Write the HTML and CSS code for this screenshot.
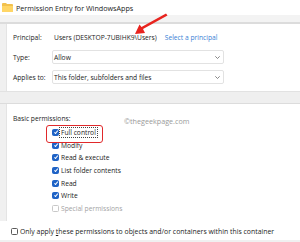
FILE: index.html
```html
<!DOCTYPE html>
<html>
<head>
<meta charset="utf-8">
<link rel="stylesheet" href="styles.css">
</head>
<body>
<div class="titlebar">
  <svg class="folder" width="11" height="9" viewBox="0 0 11 9"><path d="M0 1 Q0 0 1 0 H4 L5 1 H10 Q11 1 11 2 V8 Q11 9 10 9 H1 Q0 9 0 8 Z" fill="#f2c14e"/><path d="M0 3 H11 V8 Q11 9 10 9 H1 Q0 9 0 8 Z" fill="#ffd666"/></svg>
  <span class="title">Permission Entry for WindowsApps</span>
</div>
<div class="band"></div>
<div class="panel top">
  <div class="row">
    <span class="label">Principal:</span>
    <span class="value">Users (DESKTOP-7UBIHK9\Users)</span>
    <span class="link">Select a principal</span>
  </div>
  <div class="row">
    <span class="label">Type:</span>
    <div class="select"><span>Allow</span><svg width="5" height="3" viewBox="0 0 5 3"><path d="M0.3 0.3 L2.5 2.5 L4.7 0.3" fill="none" stroke="#555" stroke-width="0.7"/></svg></div>
  </div>
  <div class="row">
    <span class="label">Applies to:</span>
    <div class="select"><span>This folder, subfolders and files</span><svg width="5" height="3" viewBox="0 0 5 3"><path d="M0.3 0.3 L2.5 2.5 L4.7 0.3" fill="none" stroke="#555" stroke-width="0.7"/></svg></div>
  </div>
</div>
<div class="band2"></div>
<div class="panel perms">
  <div class="head">
    <span class="label">Basic permissions:</span>
    <span class="mark">©thegeekpage.com</span>
  </div>
  <div class="list">
    <div class="item"><span class="cb on"></span><span class="focus">Full control</span></div>
    <div class="item"><span class="cb on"></span><span>Modify</span></div>
    <div class="item"><span class="cb on"></span><span>Read &amp; execute</span></div>
    <div class="item"><span class="cb on"></span><span>List folder contents</span></div>
    <div class="item"><span class="cb on"></span><span>Read</span></div>
    <div class="item"><span class="cb on"></span><span>Write</span></div>
    <div class="item disabled"><span class="cb"></span><span>Special permissions</span></div>
    <div class="redbox"></div>
  </div>
</div>
<div class="bottom">
  <span class="cb plain"></span><span>Only apply <u>t</u>hese permissions to objects and/or containers within this container</span>
</div>
<svg class="arrow" width="60" height="30" viewBox="0 0 60 30"><path d="M46 0.5 L47.5 2.5 L23 16 L25 20 L15 21 L19.5 11.5 L21.5 14 Z" fill="#e8241f"/></svg>
</body>
</html>
```
FILE: styles.css
```css
html, body {
  margin: 0;
  padding: 0;
}
body {
  width: 300px;
  height: 242px;
  overflow: hidden;
  background: #f0f0f0;
  font-family: "Open Sans", "Noto Sans", sans-serif;
  font-size: 6.7px;
  color: #1b1b1b;
  position: relative;
}
.titlebar {
  height: 15px;
  background: #fff;
  display: flex;
  align-items: center;
  gap: 3px;
  padding-left: 2px;
}
.folder { flex: none; }
.title { font-size: 7.2px; color: #222; }
.band {
  height: 7px;
  background: #f3f3f3;
  border-bottom: 2px solid #dcdcdc;
}
.panel {
  margin-left: 6px;
  background: #fff;
  border-left: 1px solid #e4e4e4;
}
.top {
  height: 61px;
  padding: 6px 0 0 6px;
  display: flex;
  flex-direction: column;
  gap: 6px;
}
.row {
  height: 14px;
  display: flex;
  align-items: center;
}
.label {
  width: 39px;
  flex: none;
}
.value { padding-left: 2px; }
.link {
  margin-left: 8px;
  color: #3a7fd5;
}
.select {
  width: 166px;
  height: 12px;
  border: 1px solid #e2e2e2;
  border-radius: 2px;
  display: flex;
  align-items: center;
  justify-content: space-between;
  padding: 0 3px 0 1px;
  box-sizing: content-box;
}
.select svg { flex: none; }
.band2 {
  height: 11px;
  background: #efefef;
  border-top: 1px solid #e2e2e2;
  border-bottom: 1px solid #dcdcdc;
}
.perms {
  height: 117px;
  padding: 8px 0 0 6px;
  box-sizing: border-box;
}
.head {
  height: 12px;
  display: flex;
  align-items: center;
}
.head .label { width: 111px; }
.mark {
  color: #9a9a9a;
  font-size: 7.2px;
  margin-top: 6px;
}
.list {
  position: relative;
  margin-top: 2px;
  padding-left: 39px;
}
.item {
  height: 12.7px;
  display: flex;
  align-items: center;
  gap: 2px;
}
.cb {
  width: 7px;
  height: 7px;
  box-sizing: border-box;
  border-radius: 1.5px;
  border: 1px solid #c8c8c8;
  background: #fff;
  flex: none;
  position: relative;
}
.cb.on {
  background: #1f63c6;
  border-color: #1f63c6;
}
.cb.on::after {
  content: "";
  position: absolute;
  left: 1.6px;
  top: 0.2px;
  width: 1.4px;
  height: 3.2px;
  border: solid #fff;
  border-width: 0 0.8px 0.8px 0;
  transform: rotate(40deg);
}
.focus {
  outline: 1px dotted #444;
  outline-offset: 0;
  padding: 0 1px;
  margin-left: -1px;
}
.disabled { color: #a3a3a3; }
.redbox {
  position: absolute;
  left: 33px;
  top: -1px;
  width: 55px;
  height: 16px;
  border: 1.5px solid #e0292b;
  border-radius: 3px;
}
.bottom {
  height: 18px;
  padding-top: 1px;
  background: #fff;
  display: flex;
  align-items: center;
  gap: 2px;
  padding-left: 11px;
  font-size: 6.9px;
}
.cb.plain {
  border-color: #5a5a5a;
}
.bottom u { text-decoration: underline; }
.arrow {
  position: absolute;
  left: 120px;
  top: 13px;
}
```
